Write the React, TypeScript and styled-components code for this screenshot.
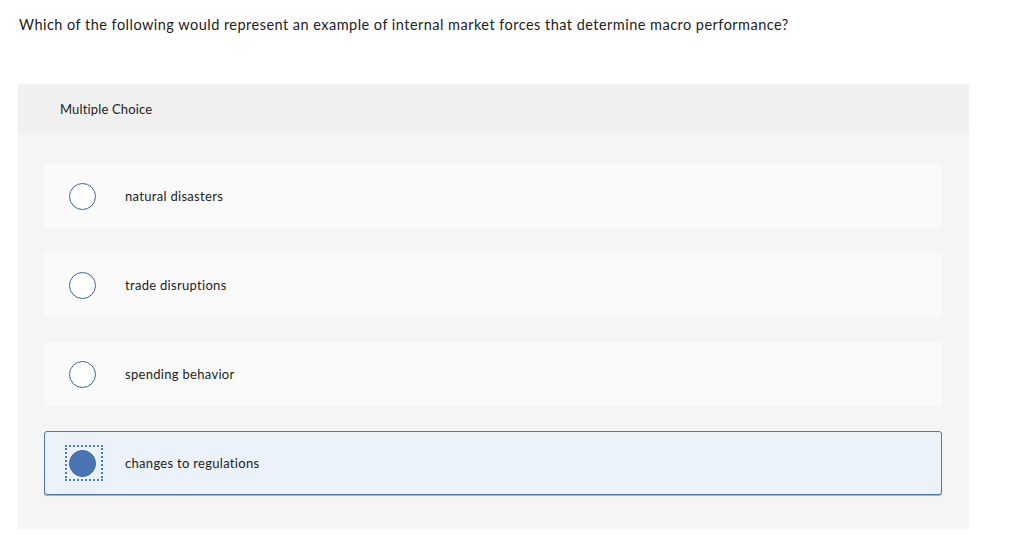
import React from "react";
import styled, { createGlobalStyle } from "styled-components";

const GlobalStyle = createGlobalStyle`
  html, body {
    margin: 0;
    padding: 0;
    background: #ffffff;
  }
  body {
    font-family: "Lato", "Liberation Sans", sans-serif;
    color: #1f1f1f;
  }
`;

const Page = styled.main`
  padding: 15px 55px 8px 18px;
`;

const Question = styled.p`
  margin: 0 0 0 1px;
  font-size: 14.5px;
  letter-spacing: 0.47px;
  line-height: 20px;
  color: #1c1c1c;
`;

const Panel = styled.section`
  margin-top: 49px;
  width: 951px;
  background: #f5f5f5;
`;

const PanelHeader = styled.header`
  height: 49px;
  display: flex;
  align-items: center;
  padding-left: 42px;
  background: #f0f0f0;
  font-size: 13px;
  letter-spacing: 0.15px;
  color: #222;
`;

const OptionList = styled.div`
  display: flex;
  flex-direction: column;
  gap: 25px;
  padding: 31px 27px 34px 26px;
`;

const Option = styled.label<{ $selected?: boolean }>`
  box-sizing: border-box;
  height: 64px;
  display: flex;
  align-items: center;
  padding-left: 24px;
  border-radius: 3px;
  background: ${(p) => (p.$selected ? "#ebf2fa" : "#fafafa")};
  border: 1px solid ${(p) => (p.$selected ? "#4b77b6" : "transparent")};
  box-shadow: ${(p) => (p.$selected ? "0 1px 0 #9db4d6" : "none")};
  cursor: pointer;
`;

const RadioWrap = styled.span<{ $focused?: boolean }>`
  width: 36px;
  height: 34px;
  display: flex;
  align-items: center;
  padding-left: 3px;
  box-sizing: border-box;
  margin-left: -3px;
  outline: ${(p) => (p.$focused ? "2px dotted #4a7cc4" : "none")};
  outline-offset: -1px;
`;

const Radio = styled.span<{ $checked?: boolean }>`
  box-sizing: border-box;
  width: 27px;
  height: 27px;
  border-radius: 50%;
  border: 1.5px solid #3a629d;
  background: ${(p) => (p.$checked ? "#4a75b3" : "#ffffff")};
`;

const OptionText = styled.span`
  margin-left: 23px;
  font-size: 13px;
  letter-spacing: 0.3px;
  color: #222;
`;

const options = [
  "natural disasters",
  "trade disruptions",
  "spending behavior",
  "changes to regulations",
];

const selectedIndex = 3;

export default function App() {
  return (
    <>
      <GlobalStyle />
      <Page>
        <Question>
          Which of the following would represent an example of internal market forces that
          determine macro performance?
        </Question>

        <Panel>
          <PanelHeader>Multiple Choice</PanelHeader>
          <OptionList>
            {options.map((text, i) => (
              <Option key={text} $selected={i === selectedIndex}>
                <RadioWrap $focused={i === selectedIndex}>
                  <Radio $checked={i === selectedIndex} />
                </RadioWrap>
                <OptionText>{text}</OptionText>
              </Option>
            ))}
          </OptionList>
        </Panel>
      </Page>
    </>
  );
}
